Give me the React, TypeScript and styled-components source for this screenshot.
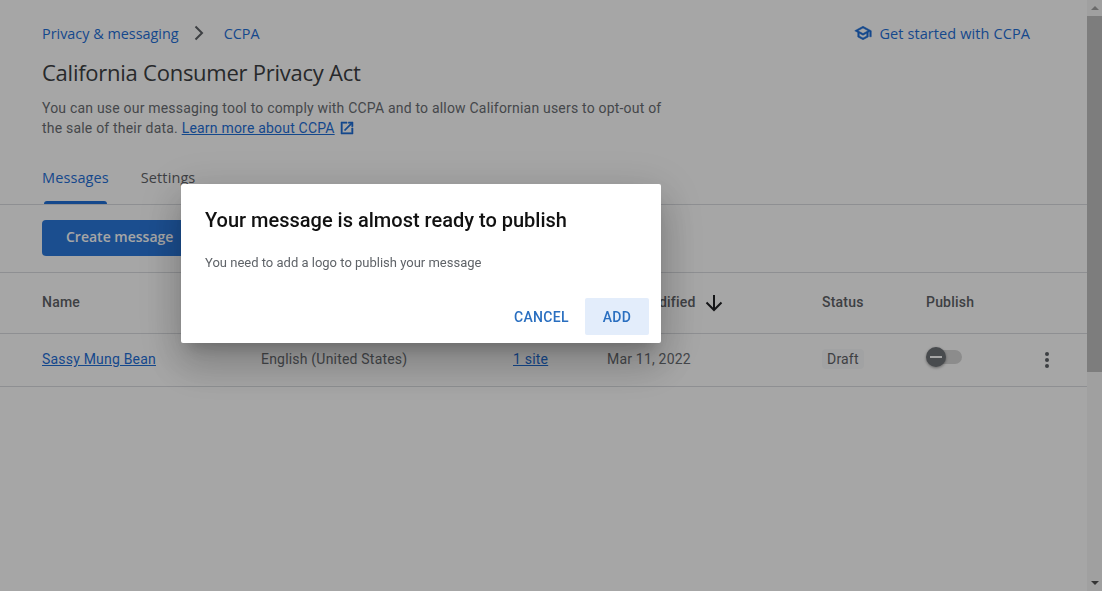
import React from 'react';
import styled, { createGlobalStyle } from 'styled-components';

const GlobalStyle = createGlobalStyle`
  html, body {
    margin: 0;
    height: 100%;
    overflow: hidden;
    background: #fff;
    font-family: Roboto, "Liberation Sans", sans-serif;
  }
  #root { height: 100%; }
`;

const HEADING_FONT = `"Open Sans", Roboto, sans-serif`;
const BLUE = '#1f6fd8';
const DIALOG_BLUE = '#2a6fc0';
const GREY = '#5f6368';
const LINE = '#dadce0';

const Page = styled.div`
  display: flex;
  width: 1102px;
  height: 591px;
  overflow: hidden;
`;

const Main = styled.main`
  flex: 1;
  min-width: 0;
`;

const Intro = styled.header`
  padding: 23px 57px 0 42px;
`;

const TopBar = styled.div`
  display: flex;
  justify-content: space-between;
  align-items: center;
  height: 20px;
`;

const Breadcrumbs = styled.nav`
  display: flex;
  align-items: center;
  gap: 15px;
`;

const HeadingLink = styled.a`
  font-family: ${HEADING_FONT};
  font-size: 14.4px;
  font-weight: 500;
  color: ${BLUE};
  text-decoration: none;
  white-space: nowrap;
`;

const GuideLink = styled(HeadingLink)`
  display: flex;
  align-items: center;
  gap: 7px;
  font-size: 14.5px;
  letter-spacing: 0.1px;
`;

const GuideIcon = styled.svg`
  width: 18px;
  height: 18px;
  fill: ${BLUE};
  stroke: ${BLUE};
  stroke-width: 0.7;
`;

const Title = styled.h1`
  margin: 14px 0 0;
  height: 30px;
  font-family: ${HEADING_FONT};
  font-size: 22px;
  line-height: 30px;
  font-weight: 400;
  letter-spacing: -0.25px;
  color: #3c4043;
`;

const Description = styled.p`
  margin: 11px 0 0;
  width: 640px;
  font-size: 14px;
  line-height: 20px;
  letter-spacing: 0.2px;
  color: #6a6e73;
`;

const TextLink = styled.a`
  color: ${BLUE};
  text-decoration: underline;
`;

const ExternalIcon = styled.svg`
  display: inline-block;
  width: 16px;
  height: 16px;
  margin-left: 4px;
  vertical-align: -3px;
  fill: ${BLUE};
  stroke: ${BLUE};
  stroke-width: 0.8;
`;

const Tabs = styled.div`
  display: flex;
  gap: 32px;
  height: 42px;
  margin-top: 24px;
  padding-left: 42px;
  border-bottom: 1px solid ${LINE};
`;

const Tab = styled.div<{ $active?: boolean }>`
  position: relative;
  padding-top: 6px;
  font-family: ${HEADING_FONT};
  font-size: 14.5px;
  font-weight: 500;
  letter-spacing: 0.1px;
  color: ${(p) => (p.$active ? BLUE : GREY)};

  ${(p) =>
    p.$active &&
    `&::after {
      content: '';
      position: absolute;
      left: 2px;
      right: 2px;
      bottom: 0;
      height: 3px;
      border-radius: 3px 3px 0 0;
      background: ${BLUE};
    }`}
`;

const Toolbar = styled.div`
  height: 68px;
  padding: 15px 0 0 42px;
  box-sizing: border-box;
  border-bottom: 1px solid ${LINE};
`;

const PrimaryButton = styled.button`
  height: 36px;
  padding: 0 24px 3px;
  border: 0;
  border-radius: 4px;
  background: #2a78dc;
  color: #fff;
  font-family: ${HEADING_FONT};
  font-size: 14px;
  font-weight: 600;
`;

const TableRow = styled.div<{ $height: number }>`
  display: grid;
  grid-template-columns: 219px 252px 94px 215px 104px 1fr 40px;
  align-items: center;
  box-sizing: border-box;
  height: ${(p) => p.$height}px;
  padding: 0 20px 2px 42px;
  border-bottom: 1px solid ${LINE};
  font-size: 14px;
  letter-spacing: 0.2px;
  color: #6a6e73;
`;

const HeaderCell = styled.div`
  display: flex;
  align-items: center;
  gap: 8px;
  font-weight: 500;
  color: ${GREY};
`;

const SortArrow = styled.svg`
  width: 20px;
  height: 20px;
  margin-top: 2px;
  fill: none;
  stroke: #202124;
  stroke-width: 2;
`;

const StatusChip = styled.span`
  justify-self: start;
  padding: 2px 5px;
  border-radius: 4px;
  background: #f8f9fa;
  color: ${GREY};
`;

const Toggle = styled.div`
  position: relative;
  width: 36px;
  height: 14px;
  margin-top: -4px;
`;

const ToggleTrack = styled.div`
  position: absolute;
  left: 8px;
  right: 0;
  top: 0;
  bottom: 0;
  border-radius: 7px;
  background: #d8d8d8;
`;

const ToggleKnob = styled.div`
  position: absolute;
  left: 0;
  top: -3px;
  width: 20px;
  height: 20px;
  border-radius: 50%;
  background: #6f7378;
  box-shadow: 0 1px 3px rgba(0, 0, 0, 0.4);
  display: flex;
  align-items: center;
  justify-content: center;

  &::after {
    content: '';
    width: 12px;
    height: 2px;
    background: #fff;
  }
`;

const MenuIcon = styled.svg`
  width: 24px;
  height: 24px;
  margin-top: 2px;
  justify-self: center;
  fill: ${GREY};
`;

const Scrollbar = styled.div`
  display: flex;
  flex-direction: column;
  width: 15px;
  background: #f6f6f6;
`;

const ScrollArrow = styled.div<{ $down?: boolean }>`
  flex: none;
  height: 16px;
  display: flex;
  align-items: center;
  justify-content: center;

  &::after {
    content: '';
    border-left: 4px solid transparent;
    border-right: 4px solid transparent;
    ${(p) => (p.$down ? 'border-top: 4px solid #505050;' : 'border-bottom: 4px solid #a3a3a3;')}
  }
`;

const ScrollThumb = styled.div`
  flex: none;
  height: 356px;
  background: #c1c1c1;
`;

const ScrollSpace = styled.div`
  flex: 1;
`;

const Scrim = styled.div`
  position: fixed;
  inset: 0;
  background: rgba(0, 0, 0, 0.35);
`;

const Dialog = styled.div`
  position: fixed;
  left: 181px;
  top: 184px;
  width: 480px;
  height: 159px;
  box-sizing: border-box;
  padding: 24px 12px 8px 24px;
  display: flex;
  flex-direction: column;
  background: #fff;
  border-radius: 2px;
  box-shadow: 0 11px 15px -7px rgba(0, 0, 0, 0.2), 0 24px 38px 3px rgba(0, 0, 0, 0.14),
    0 9px 46px 8px rgba(0, 0, 0, 0.12);
`;

const DialogTitle = styled.h2`
  margin: 0;
  font-size: 20px;
  line-height: 24px;
  font-weight: 500;
  color: #111;
`;

const DialogText = styled.p`
  margin: 21px 0 0;
  font-size: 13px;
  line-height: 20px;
  color: ${GREY};
`;

const DialogActions = styled.div`
  display: flex;
  justify-content: flex-end;
  margin-top: auto;
`;

const DialogButton = styled.button<{ $focused?: boolean }>`
  height: 37px;
  padding: 0 16px;
  min-width: 64px;
  border: 0;
  border-radius: 2px;
  background: ${(p) => (p.$focused ? '#e3edfb' : 'transparent')};
  color: ${DIALOG_BLUE};
  font-family: Roboto, sans-serif;
  font-size: 14px;
  font-weight: 500;
  letter-spacing: 0.35px;
`;

export default function App() {
  return (
    <Page>
      <GlobalStyle />
      <Main>
        <Intro>
          <TopBar>
            <Breadcrumbs>
              <HeadingLink>Privacy &amp; messaging</HeadingLink>
              <svg width="15" height="16" viewBox="0 0 15 16" fill="none" stroke={GREY} strokeWidth="2">
                <path d="M1.5 1.5L8 8l-6.5 6.5" />
              </svg>
              <HeadingLink>CCPA</HeadingLink>
            </Breadcrumbs>
            <GuideLink>
              <GuideIcon viewBox="0 0 24 24">
                <path d="M12 3L1 9l4 2.18v6L12 21l7-3.82v-6l2-1.09V17h2V9L12 3zm6.82 6L12 12.72 5.18 9 12 5.28 18.82 9zM17 16l-5 2.72L7 16v-3.73L12 15l5-2.73V16z" />
              </GuideIcon>
              Get started with CCPA
            </GuideLink>
          </TopBar>
          <Title>California Consumer Privacy Act</Title>
          <Description>
            You can use our messaging tool to comply with CCPA and to allow Californian users to opt-out of the sale of
            their data. <TextLink>Learn more about CCPA</TextLink>
            <ExternalIcon viewBox="0 0 24 24">
              <path d="M19 19H5V5h7V3H3v18h18v-9h-2v7zM14 3v2h3.59l-9.83 9.83 1.41 1.41L19 6.41V10h2V3h-7z" />
            </ExternalIcon>
          </Description>
        </Intro>
        <Tabs>
          <Tab $active>Messages</Tab>
          <Tab>Settings</Tab>
        </Tabs>
        <Toolbar>
          <PrimaryButton>Create message</PrimaryButton>
        </Toolbar>
        <TableRow $height={61}>
          <HeaderCell>Name</HeaderCell>
          <HeaderCell>Languages</HeaderCell>
          <HeaderCell>Sites</HeaderCell>
          <HeaderCell>
            Last modified
            <SortArrow viewBox="0 0 20 20">
              <path d="M10 2v15M2.5 9.5L10 17l7.5-7.5" />
            </SortArrow>
          </HeaderCell>
          <HeaderCell>Status</HeaderCell>
          <HeaderCell>Publish</HeaderCell>
          <div />
        </TableRow>
        <TableRow $height={53}>
          <TextLink>Sassy Mung Bean</TextLink>
          <div>English (United States)</div>
          <TextLink>1 site</TextLink>
          <div>Mar 11, 2022</div>
          <StatusChip>Draft</StatusChip>
          <Toggle>
            <ToggleTrack />
            <ToggleKnob />
          </Toggle>
          <MenuIcon viewBox="0 0 24 24">
            <circle cx="12" cy="6" r="2" />
            <circle cx="12" cy="12" r="2" />
            <circle cx="12" cy="18" r="2" />
          </MenuIcon>
        </TableRow>
      </Main>
      <Scrollbar>
        <ScrollArrow />
        <ScrollThumb />
        <ScrollSpace />
        <ScrollArrow $down />
      </Scrollbar>
      <Scrim />
      <Dialog>
        <DialogTitle>Your message is almost ready to publish</DialogTitle>
        <DialogText>You need to add a logo to publish your message</DialogText>
        <DialogActions>
          <DialogButton>CANCEL</DialogButton>
          <DialogButton $focused>ADD</DialogButton>
        </DialogActions>
      </Dialog>
    </Page>
  );
}
